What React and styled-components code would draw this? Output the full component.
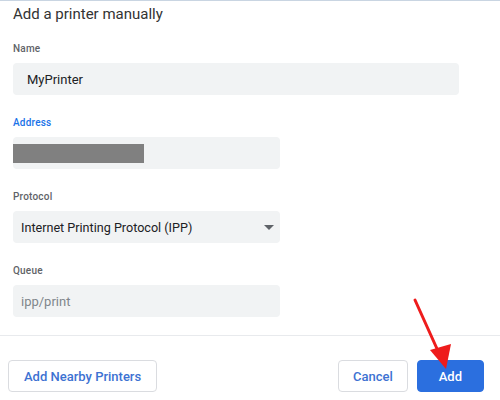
import React from 'react';
import styled, { createGlobalStyle } from 'styled-components';

const GlobalStyle = createGlobalStyle`
  html, body {
    margin: 0;
    padding: 0;
    background: #ffffff;
  }
  body {
    font-family: Roboto, "Liberation Sans", Arial, sans-serif;
    color: #202124;
  }
`;

const Dialog = styled.div`
  position: relative;
  width: 500px;
  height: 400px;
  box-sizing: border-box;
  border-top: 1px solid #c9d5e2;
  overflow: hidden;
  display: flex;
  flex-direction: column;
`;

const Body = styled.div`
  padding: 3px 0 0 13px;
  display: flex;
  flex-direction: column;
`;

const Title = styled.h1`
  margin: 0 0 19px;
  font-size: 15px;
  line-height: 20px;
  font-weight: 400;
  color: #333333;
`;

const Fields = styled.div`
  display: flex;
  flex-direction: column;
  gap: 22px;
`;

const Field = styled.div`
  display: flex;
  flex-direction: column;
  gap: 8px;
`;

const Label = styled.label`
  font-size: 10px;
  line-height: 12px;
  height: 12px;
  font-weight: 500;
  letter-spacing: 0.2px;
  color: ${p => (p.$focused ? '#1a73e8' : '#5f6368')};
`;

const Input = styled.div`
  width: ${p => p.$width}px;
  height: 32px;
  box-sizing: border-box;
  background: #f1f3f4;
  border-radius: 4px;
  display: flex;
  align-items: center;
  padding: 0 ${p => (p.$pad != null ? p.$pad : 8)}px;
  font-size: 13px;
  color: ${p => (p.$placeholder ? '#80868b' : '#202124')};
`;

const Redacted = styled.div`
  width: 131px;
  height: 19px;
  background: #808080;
`;

const SelectText = styled.span`
  flex: 1;
  font-size: 12.6px;
`;

const Caret = styled.span`
  width: 0;
  height: 0;
  margin-right: -2px;
  border-left: 5px solid transparent;
  border-right: 5px solid transparent;
  border-top: 5px solid #5f6368;
`;

const Divider = styled.div`
  margin-top: 18px;
  height: 1px;
  background: #e8eaed;
`;

const Footer = styled.div`
  display: flex;
  align-items: center;
  padding: 24px 16px 0 8px;
  gap: 9px;
`;

const Spacer = styled.div`
  flex: 1;
`;

const Button = styled.button`
  height: 32px;
  box-sizing: border-box;
  padding: 0 ${p => p.$pad}px;
  border-radius: 4px;
  border: 1px solid ${p => (p.$primary ? '#2b6fdf' : '#dadce0')};
  background: ${p => (p.$primary ? '#2b6fdf' : '#ffffff')};
  color: ${p => (p.$primary ? '#ffffff' : '#3d72d2')};
  font-family: Roboto, "Liberation Sans", Arial, sans-serif;
  font-size: 13px;
  font-weight: 500;
  cursor: pointer;
`;

const Arrow = styled.svg`
  position: absolute;
  left: 0;
  top: 0;
  pointer-events: none;
`;

export default function App() {
  return (
    <>
      <GlobalStyle />
      <Dialog>
        <Body>
          <Title>Add a printer manually</Title>
          <Fields>
            <Field>
              <Label>Name</Label>
              <Input $width={446} $pad={14}>MyPrinter</Input>
            </Field>
            <Field>
              <Label $focused>Address</Label>
              <Input $width={267} $pad={0}>
                <Redacted />
              </Input>
            </Field>
            <Field>
              <Label>Protocol</Label>
              <Input $width={267}>
                <SelectText>Internet Printing Protocol (IPP)</SelectText>
                <Caret />
              </Input>
            </Field>
            <Field>
              <Label>Queue</Label>
              <Input $width={267} $placeholder>ipp/print</Input>
            </Field>
          </Fields>
        </Body>
        <Divider />
        <Footer>
          <Button $pad={15}>Add Nearby Printers</Button>
          <Spacer />
          <Button $pad={14}>Cancel</Button>
          <Button $primary $pad={21}>Add</Button>
        </Footer>
        <Arrow width="500" height="400" viewBox="0 0 500 400">
          <line x1="415" y1="299" x2="438" y2="350" stroke="#ee1c1c" strokeWidth="3" strokeLinecap="round" />
          <polygon points="446,368 430,349 451,343" fill="#ee1c1c" />
        </Arrow>
      </Dialog>
    </>
  );
}
